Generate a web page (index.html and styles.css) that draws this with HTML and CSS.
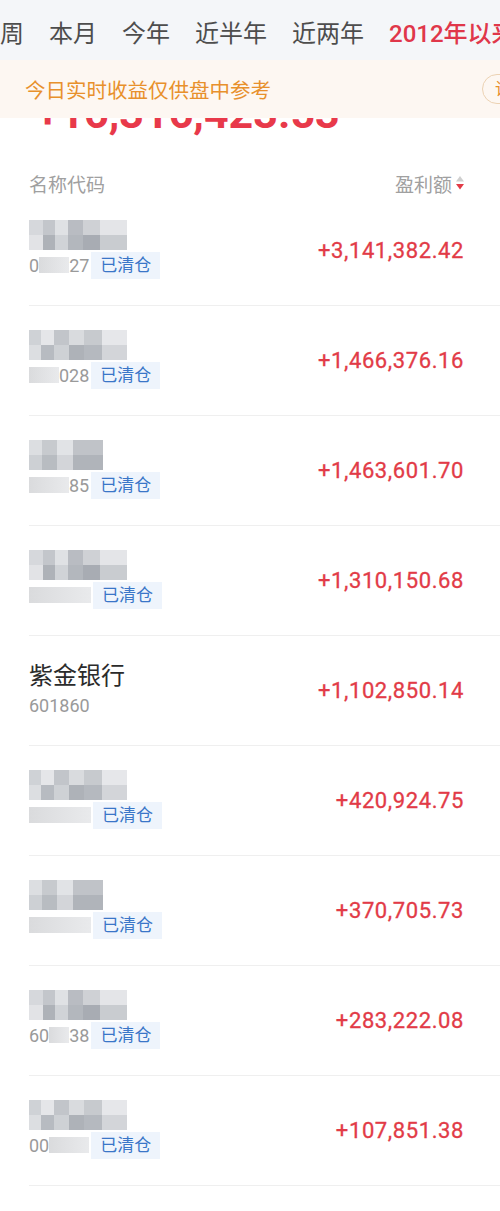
FILE: index.html
```html
<html>

<head>
    <title>收益明细</title>
    <link rel="stylesheet" href="styles.css">
</head>

<body>
    <div class="tabs">
        <div class="tab-strip">
            <span class="tab">本周</span>
            <span class="tab">本月</span>
            <span class="tab">今年</span>
            <span class="tab">近半年</span>
            <span class="tab">近两年</span>
            <span class="tab active">2012年以来</span>
        </div>
    </div>

    <div class="notice">
        <span class="notice-text">今日实时收益仅供盘中参考</span>
        <span class="notice-more">详情</span>
    </div>

    <div class="summary">
        <div class="total">+16,316,423.53</div>
    </div>

    <div class="list">
        <div class="list-head">
            <span>名称代码</span>
            <span class="sort">盈利额
                <svg width="8" height="14" viewBox="0 0 8 14">
                    <polygon points="4,0 8,5.5 0,5.5" fill="#cfcfcf"/>
                    <polygon points="0,8 8,8 4,13.5" fill="#e23b47"/>
                </svg>
            </span>
        </div>

        <div class="row">
            <div class="stock">
                <div class="blur blur-a"></div>
                <div class="code">0<i class="smudge"></i>27<span class="tag">已清仓</span></div>
            </div>
            <div class="profit">+3,141,382.42</div>
        </div>

        <div class="row">
            <div class="stock">
                <div class="blur blur-b"></div>
                <div class="code"><i class="smudge"></i>028<span class="tag">已清仓</span></div>
            </div>
            <div class="profit">+1,466,376.16</div>
        </div>

        <div class="row">
            <div class="stock">
                <div class="blur blur-c"></div>
                <div class="code"><i class="smudge long"></i>85<span class="tag">已清仓</span></div>
            </div>
            <div class="profit">+1,463,601.70</div>
        </div>

        <div class="row">
            <div class="stock">
                <div class="blur blur-a"></div>
                <div class="code"><i class="smudge wide"></i><span class="tag">已清仓</span></div>
            </div>
            <div class="profit">+1,310,150.68</div>
        </div>

        <div class="row">
            <div class="stock">
                <div class="name">紫金银行</div>
                <div class="code">601860</div>
            </div>
            <div class="profit">+1,102,850.14</div>
        </div>

        <div class="row">
            <div class="stock">
                <div class="blur blur-b"></div>
                <div class="code"><i class="smudge wide"></i><span class="tag">已清仓</span></div>
            </div>
            <div class="profit">+420,924.75</div>
        </div>

        <div class="row">
            <div class="stock">
                <div class="blur blur-c"></div>
                <div class="code"><i class="smudge wide"></i><span class="tag">已清仓</span></div>
            </div>
            <div class="profit">+370,705.73</div>
        </div>

        <div class="row">
            <div class="stock">
                <div class="blur blur-a"></div>
                <div class="code">60<i class="smudge short"></i>38<span class="tag">已清仓</span></div>
            </div>
            <div class="profit">+283,222.08</div>
        </div>

        <div class="row">
            <div class="stock">
                <div class="blur blur-b"></div>
                <div class="code">00<i class="smudge long"></i><span class="tag">已清仓</span></div>
            </div>
            <div class="profit">+107,851.38</div>
        </div>
    </div>
</body>

</html>
```

FILE: styles.css
```css
body {
    margin: 0;
    background: #fff;
    font-family: Roboto, "Noto Sans CJK SC", sans-serif;
    overflow-x: hidden;
}

.tabs {
    height: 60px;
    background: #f4f6f9;
    overflow: hidden;
}

.tab-strip {
    display: flex;
    gap: 25px;
    margin-left: -24px;
    height: 60px;
    align-items: center;
    white-space: nowrap;
}

.tab {
    font-size: 24px;
    color: #4d4d4d;
    padding-top: 2px;
}

.tab.active {
    color: #e0374a;
    font-weight: 500;
}

.notice {
    position: relative;
    z-index: 1;
    display: flex;
    align-items: center;
    justify-content: space-between;
    height: 58px;
    padding-left: 25px;
    background: #fdf7f2;
    overflow: hidden;
}

.notice-text {
    font-size: 20.5px;
    color: #e8902c;
}

.notice-more {
    flex-shrink: 0;
    margin-right: -42px;
    padding: 0 12px;
    height: 28px;
    line-height: 28px;
    border: 1px solid #ecd2b3;
    border-radius: 15px;
    font-size: 17px;
    color: #e8902c;
}

.summary {
    margin-top: -26px;
    padding-left: 36px;
}

.total {
    font-size: 43px;
    line-height: 42px;
    font-weight: 700;
    color: #e8394a;
}

.list {
    margin-top: 36px;
    padding-left: 29px;
}

.list-head {
    display: flex;
    justify-content: space-between;
    align-items: center;
    height: 26px;
    padding-right: 36px;
    font-size: 19px;
    color: #a0a0a0;
}

.sort {
    display: flex;
    align-items: center;
    gap: 4px;
}

.row {
    display: flex;
    align-items: center;
    justify-content: space-between;
    height: 109px;
    padding-right: 36px;
    border-bottom: 1px solid #efefef;
}

.stock {
    margin-top: -3px;
}

.name {
    font-size: 24px;
    line-height: 32px;
    color: #2b2b2b;
}

.blur {
    width: 98px;
    height: 30px;
    margin-bottom: 2px;
    background-repeat: no-repeat;
    background-size: 100% 50%;
    background-position: top, bottom;
}

.blur-a {
    background-image:
        linear-gradient(90deg, #d6d8dc 0 14%, #c3c6cb 14% 27%, #dfe1e4 27% 40%, #b9bcc2 40% 55%, #cfd1d5 55% 72%, #e4e5e8 72% 100%),
        linear-gradient(90deg, #e2e3e6 0 14%, #aeb2b8 14% 27%, #d0d3d7 27% 40%, #b3b7bd 40% 55%, #a8acb3 55% 72%, #c9ccd0 72% 100%);
}

.blur-b {
    background-image:
        linear-gradient(90deg, #cfd2d6 0 12%, #e5e6e9 12% 26%, #c2c5ca 26% 41%, #d9dbde 41% 56%, #c7cace 56% 74%, #e6e7ea 74% 100%),
        linear-gradient(90deg, #dcdee1 0 12%, #b7bbc1 12% 26%, #ced1d5 26% 41%, #aeb2b8 41% 56%, #b5b9bf 56% 74%, #d3d5d9 74% 100%);
}

.blur-c {
    width: 74px;
    background-image:
        linear-gradient(90deg, #dcdee1 0 18%, #c7cace 18% 38%, #e1e3e6 38% 60%, #c0c3c8 60% 100%),
        linear-gradient(90deg, #cdd0d4 0 18%, #b8bcc1 18% 38%, #d3d5d9 38% 60%, #b0b4ba 60% 100%);
}

.code {
    display: flex;
    align-items: center;
    height: 27px;
    font-size: 18px;
    color: #9a9a9a;
}

.smudge {
    display: inline-block;
    width: 30px;
    height: 16px;
    background: linear-gradient(90deg, #dadbdd, #e9eaec);
}

.smudge.short {
    width: 20px;
}

.smudge.long {
    width: 40px;
}

.smudge.wide {
    width: 62px;
}

.tag {
    margin-left: 2px;
    padding: 0 9px;
    height: 27px;
    line-height: 27px;
    font-size: 17px;
    color: #3a76c8;
    background: #eef4fc;
}

.profit {
    font-size: 22px;
    letter-spacing: 0.6px;
    color: #e23b47;
    -webkit-text-stroke: 0.3px #e23b47;
}
```
